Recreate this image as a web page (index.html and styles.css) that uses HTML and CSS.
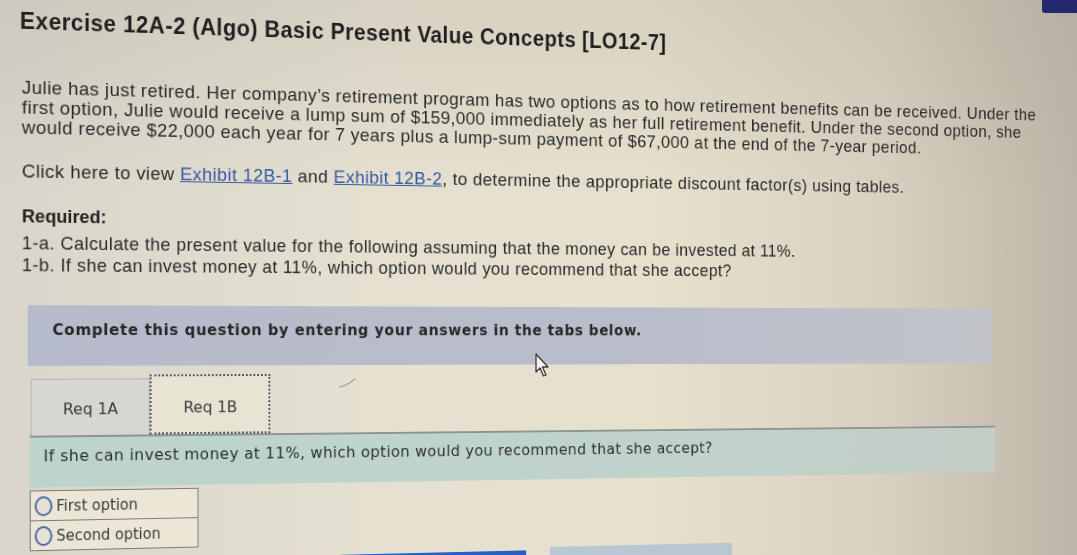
FILE: index.html
```html
<!DOCTYPE html>
<html lang="en">
<head>
<meta charset="utf-8">
<title>Exercise 12A-2 (Algo) Basic Present Value Concepts</title>
<link rel="stylesheet" href="styles.css">
</head>
<body>
<div class="page">
  <h1 class="title">Exercise 12A-2 (Algo) Basic Present Value Concepts [LO12-7]</h1>
  <p class="intro">Julie has just retired. Her company’s retirement program has two options as to how retirement benefits can be received. Under the<br>first option, Julie would receive a lump sum of $159,000 immediately as her full retirement benefit. Under the second option, she<br>would receive $22,000 each year for 7 years plus a lump-sum payment of $67,000 at the end of the 7-year period.</p>
  <p class="click">Click here to view <a class="link" href="#">Exhibit 12B-1</a> and <a class="link" href="#">Exhibit 12B-2</a>, to determine the appropriate discount factor(s) using tables.</p>
  <div class="required">
    <div class="req-head">Required:</div>
    <div class="req-line">1-a. Calculate the present value for the following assuming that the money can be invested at 11%.</div>
    <div class="req-line">1-b. If she can invest money at 11%, which option would you recommend that she accept?</div>
  </div>
  <div class="band">Complete this question by entering your answers in the tabs below.</div>
  <div class="tabs">
    <div class="tab">Req 1A</div>
    <div class="tab active">Req 1B</div>
  </div>
  <div class="panel">If she can invest money at 11%, which option would you recommend that she accept?</div>
  <div class="options">
    <div class="opt"><span class="radio"></span><span>First option</span></div>
    <div class="opt"><span class="radio"></span><span>Second option</span></div>
  </div>
  <div class="buttons">
    <span class="btn primary"></span>
    <span class="btn secondary"></span>
  </div>
</div>
<div class="corner"></div>
<svg class="cursor" width="16" height="26" viewBox="0 0 16 26"><path d="M1 1 L1 19 L5 15 L8.5 23 L11 22 L7.5 14 L13 14 Z" fill="#f4f2ee" stroke="#3a3a3a" stroke-width="1.3" stroke-linejoin="round"/></svg>
<svg class="mark" width="20" height="12" viewBox="0 0 20 12"><path d="M2 10 Q10 8 17 2" fill="none" stroke="#a8a49a" stroke-width="1.4" stroke-linecap="round"/></svg>
</body>
</html>
```
FILE: styles.css
```css
html {
  background: #dcd7ca;
}
body {
  margin: 0;
  width: 1077px;
  height: 555px;
  overflow: hidden;
  position: relative;
  perspective: 1000px;
  perspective-origin: 0 340px;
  background:
    linear-gradient(180deg, rgba(150,145,135,0.18) 0%, rgba(150,145,135,0) 35%),
    linear-gradient(90deg, #d9d5cb 0%, #e5e0d0 35%, #e6e0cd 60%, #d8d1c0 82%, #bdb6a8 100%);
  color: #2a2a2a;
  font-family: "Liberation Sans", Arial, sans-serif;
}
.page {
  width: 1230px;
  box-sizing: border-box;
  padding: 6px 0 0 20px;
  transform-origin: 0 340px;
  transform: rotateY(6.14deg);
}
.title {
  margin: 0;
  font-size: 23px;
  line-height: 28px;
  font-weight: 700;
  letter-spacing: 0.5px;
  color: #1f1f1f;
  white-space: nowrap;
}
.intro {
  margin: 43px 0 0 2px;
  font-size: 19px;
  line-height: 20px;
  letter-spacing: 0.45px;
  white-space: nowrap;
}
.click {
  margin: 24px 0 0 2px;
  font-size: 19px;
  line-height: 20px;
  letter-spacing: 0.45px;
  white-space: nowrap;
}
.link {
  color: #3658a6;
  text-decoration: underline;
}
.required {
  margin: 24px 0 0 2px;
  white-space: nowrap;
}
.req-head {
  font-size: 18.5px;
  font-weight: 700;
  line-height: 22px;
  color: #222;
}
.req-line {
  font-size: 18.5px;
  line-height: 22px;
  letter-spacing: 0.45px;
}
.req-head + .req-line {
  margin-top: 5px;
}
.band {
  margin: 29px 0 0 8px;
  width: 1089px;
  height: 61px;
  box-sizing: border-box;
  padding: 15px 0 0 25px;
  background: linear-gradient(90deg, #b6bbcb 0%, #b9bdcb 60%, #c1c3c9 100%);
  font-family: "DejaVu Sans", Verdana, sans-serif;
  font-weight: 700;
  font-size: 15.5px;
  letter-spacing: 0.7px;
  line-height: 20px;
  color: #262626;
  white-space: nowrap;
}
.tabs {
  margin: 9px 0 0 11px;
  display: flex;
  align-items: flex-end;
  height: 61px;
}
.tab {
  width: 122px;
  height: 57px;
  box-sizing: border-box;
  padding-top: 2px;
  display: flex;
  align-items: center;
  justify-content: center;
  background: #d6d6d2;
  border: 1px solid #b4b5b2;
  border-bottom: none;
  font-family: "DejaVu Sans", Verdana, sans-serif;
  font-size: 16px;
  color: #3a3a3a;
}
.tab.active {
  width: 127px;
  height: 61px;
  padding-top: 6px;
  background: #e8e4d4;
  border: 2px dotted #4d5463;
}
.panel {
  margin: 0 0 0 10px;
  width: 1091px;
  height: 52px;
  box-sizing: border-box;
  padding: 9px 0 0 14px;
  border-top: 2px solid #8e9490;
  background: linear-gradient(90deg, #bcd4cd 0%, #bfd3cc 60%, #c3cdc6 100%);
  font-family: "DejaVu Sans", Verdana, sans-serif;
  font-size: 16px;
  letter-spacing: 0.5px;
  line-height: 20px;
  color: #2e2e2e;
  white-space: nowrap;
}
.options {
  margin: 3px 0 0 10px;
  width: 172px;
  border: 1.5px solid #7a7a76;
  background: #ebe6d5;
}
.opt {
  height: 29px;
  display: flex;
  align-items: center;
  gap: 4px;
  padding-left: 4px;
  font-family: "DejaVu Sans", Verdana, sans-serif;
  font-size: 15px;
  color: #3a3a3a;
}
.opt + .opt {
  border-top: 1.5px solid #7a7a76;
}
.radio {
  width: 18px;
  height: 20px;
  box-sizing: border-box;
  border: 2.5px solid #4c69a6;
  border-radius: 50%;
  background: #e6e2d6;
}
.buttons {
  margin: 8px 0 0 335px;
  display: flex;
  align-items: flex-start;
  gap: 27px;
}
.btn {
  display: block;
  height: 30px;
}
.btn.primary {
  width: 206px;
  margin-top: 3px;
  background: #2360c8;
}
.btn.secondary {
  width: 211px;
  background: #b9c7d2;
}
.corner {
  position: absolute;
  left: 1042px;
  top: -4px;
  width: 40px;
  height: 17px;
  background: #23286f;
  border-radius: 0 0 0 3px;
}
.cursor {
  position: absolute;
  left: 535px;
  top: 353px;
}
.mark {
  position: absolute;
  left: 338px;
  top: 377px;
}
```
